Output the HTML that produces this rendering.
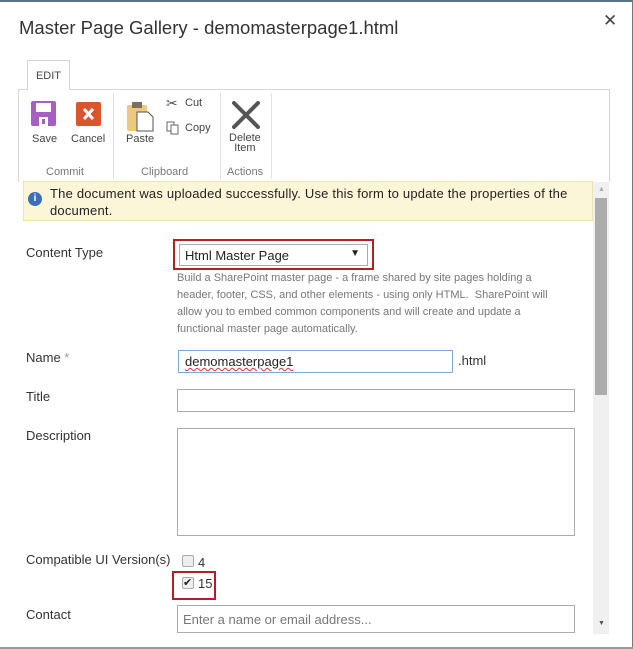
<!DOCTYPE html>
<html><head><style>
*{margin:0;padding:0;box-sizing:border-box}
body{width:633px;height:649px;overflow:hidden;background:#fff;font-family:"Liberation Sans",sans-serif;color:#333;position:relative}
.a{position:absolute}
.lbl{font-size:13px;color:#333}
.rb{font-size:11px;color:#444;text-align:center}
.gl{font-size:11px;color:#777}
.inp{border:1px solid #ababab;background:#fff}
</style></head><body>
<div class="a" style="left:0;top:0;width:633px;height:2px;background:#5b7386"></div>
<div class="a" style="right:0;top:0;width:1px;height:649px;background:#777"></div>
<div class="a" style="left:0;bottom:0;width:633px;height:2px;background:#999"></div>
<div class="a" style="left:19px;top:17px;font-size:18.5px;color:#333">Master Page Gallery - demomasterpage1.html</div>
<div class="a" style="left:603px;top:11px;font-size:17px;color:#444">✕</div>

<div class="a" style="left:27px;top:60px;width:43px;height:30px;border:1px solid #d5d5d5;border-bottom:none;background:#fff;font-size:11px;color:#444;text-align:center;line-height:30px;z-index:2">EDIT</div>
<div class="a" style="left:18px;top:89px;width:592px;height:93px;border:1px solid #d5d5d5;border-bottom:none"></div>
<div class="a" style="left:113px;top:93px;width:1px;height:86px;background:#e3e3e3"></div>
<div class="a" style="left:220px;top:93px;width:1px;height:86px;background:#e3e3e3"></div>
<div class="a" style="left:271px;top:93px;width:1px;height:86px;background:#e3e3e3"></div>
<svg class="a" style="left:31px;top:101px" width="25" height="25"><rect width="25" height="25" rx="2" fill="#a55fc0"/><rect x="5" y="2" width="15" height="9" fill="#fff"/><rect x="8" y="16" width="9" height="9" fill="#fff"/><rect x="11" y="18" width="3" height="5" fill="#a55fc0"/></svg>
<div class="a rb" style="left:32px;top:133px">Save</div>
<svg class="a" style="left:76px;top:102px" width="25" height="24"><rect width="25" height="24" rx="2" fill="#d9552f"/><path d="M8 7l9 10M17 7l-9 10" stroke="#fff" stroke-width="3"/></svg>
<div class="a rb" style="left:71px;top:133px">Cancel</div>
<svg class="a" style="left:126px;top:100px" width="30" height="32"><rect x="1" y="5" width="20" height="26" rx="2" fill="#ecc97c"/><rect x="6" y="2" width="10" height="6" fill="#7d6f5a"/><path d="M11 12h11l5 5v14H11z" fill="#fff" stroke="#555"/></svg>
<div class="a rb" style="left:126px;top:133px">Paste</div>
<div class="a" style="left:166px;top:95px;font-size:14px;color:#555">✂</div>
<div class="a rb" style="left:185px;top:97px">Cut</div>
<svg class="a" style="left:166px;top:121px" width="14" height="14"><rect x="1" y="1" width="7" height="9" fill="#fff" stroke="#666"/><rect x="5" y="4" width="7" height="9" fill="#fff" stroke="#666"/></svg>
<div class="a rb" style="left:185px;top:122px">Copy</div>
<svg class="a" style="left:232px;top:101px" width="28" height="28"><path d="M2 2L26 26M26 2L2 26" stroke="#555" stroke-width="4" stroke-linecap="round"/></svg>
<div class="a rb" style="left:229px;top:133px;line-height:10px">Delete<br>Item</div>
<div class="a gl" style="left:46px;top:166px">Commit</div>
<div class="a gl" style="left:141px;top:166px">Clipboard</div>
<div class="a gl" style="left:227px;top:166px">Actions</div>

<div class="a" style="left:23px;top:181px;width:570px;height:40px;background:#fcf6d8;border:1px solid #ede3b4"></div>
<div class="a" style="left:28px;top:192px;width:14px;height:14px;border-radius:50%;background:#3d6eb8;color:#fff;font-size:10px;font-weight:bold;text-align:center;line-height:14px">i</div>
<div class="a" style="left:50px;top:185px;width:530px;font-size:13px;line-height:17px;color:#222;letter-spacing:0.2px">The document was uploaded successfully. Use this form to update the properties of the document.</div>

<div class="a" style="left:593px;top:182px;width:16px;height:452px;background:#f0f0f0"></div>
<div class="a" style="left:595px;top:198px;width:12px;height:197px;background:#acacac"></div>
<div class="a" style="left:598px;top:186px;font-size:7px;color:#aaa">▲</div>
<div class="a" style="left:598px;top:620px;font-size:7px;color:#555">▼</div>

<div class="a lbl" style="left:26px;top:245px">Content Type</div>
<div class="a" style="left:173px;top:239px;width:201px;height:31px;border:2px solid #b21f24"></div>
<div class="a" style="left:179px;top:244px;width:189px;height:22px;border:1px solid #ababab;font-size:13px;color:#222;padding:3px 0 0 5px">Html Master Page<span style="position:absolute;right:7px;top:3px;font-size:10px">▼</span></div>
<div class="a" style="left:177px;top:270px;width:384px;font-size:11px;line-height:17px;color:#777">Build a SharePoint master page - a frame shared by site pages holding a header, footer, CSS, and other elements - using only HTML.&nbsp; SharePoint will allow you to embed common components and will create and update a functional master page automatically.</div>

<div class="a lbl" style="left:26px;top:350px">Name <span style="color:#999">*</span></div>
<div class="a" style="left:178px;top:350px;width:275px;height:23px;border:1px solid #7ea8d6;font-size:13px;color:#222;padding:3px 0 0 6px"><span style="text-decoration:underline wavy #d33;text-decoration-thickness:1px">demomasterpage1</span></div>
<div class="a lbl" style="left:458px;top:353px">.html</div>

<div class="a lbl" style="left:26px;top:389px">Title</div>
<div class="a inp" style="left:177px;top:389px;width:398px;height:23px"></div>

<div class="a lbl" style="left:26px;top:428px">Description</div>
<div class="a inp" style="left:177px;top:428px;width:398px;height:108px"></div>

<div class="a lbl" style="left:26px;top:552px">Compatible UI Version(s)</div>
<div class="a" style="left:182px;top:555px;width:12px;height:12px;border:1px solid #aaa;border-radius:2px;background:#eee"></div>
<div class="a lbl" style="left:198px;top:555px">4</div>
<div class="a" style="left:172px;top:571px;width:44px;height:29px;border:2px solid #b21f24"></div>
<div class="a" style="left:182px;top:577px;width:12px;height:12px;border:1px solid #aaa;border-radius:2px;background:#eee;font-size:11px;line-height:10px;color:#222">✔</div>
<div class="a lbl" style="left:198px;top:576px">15</div>

<div class="a lbl" style="left:26px;top:607px">Contact</div>
<div class="a inp" style="left:177px;top:605px;width:398px;height:28px;font-size:13px;color:#777;padding:6px 0 0 5px">Enter a name or email address...</div>
</body></html>
